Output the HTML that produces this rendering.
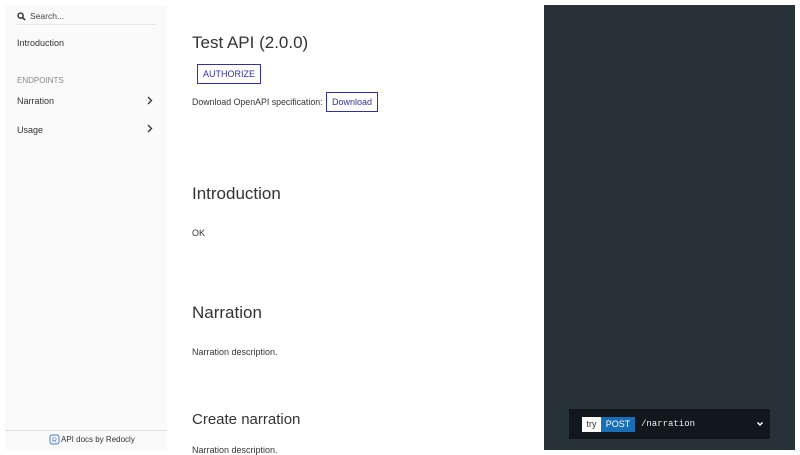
<!DOCTYPE html>
<html><head><meta charset="utf-8"><style>
*{margin:0;padding:0;box-sizing:border-box}
body{width:800px;height:450px;overflow:hidden;background:#fff;font-family:"Liberation Sans",sans-serif;color:#333;position:relative}
.a{position:absolute;white-space:nowrap}
#side{position:absolute;left:5px;top:5px;width:162px;height:445px;background:#fafafa}
#dark{position:absolute;left:544px;top:5px;width:251px;height:445px;background:#263238}
.s{font-size:9px;color:#333}
h1,h2{font-weight:normal;color:#333}
.btn{border:1px solid #32329f;color:#32329f;font-size:9px;padding:4px 5px}
</style></head><body>
<div id="side">
  <svg class="a" style="left:12px;top:7px" width="9" height="9" viewBox="0 0 10 10"><circle cx="4" cy="4" r="2.8" fill="none" stroke="#333" stroke-width="1.6"/><line x1="6" y1="6" x2="9" y2="9" stroke="#333" stroke-width="1.8"/></svg>
  <div class="a s" style="left:25px;top:6px;font-size:8.5px;color:#444">Search...</div>
  <div class="a" style="left:12px;top:19px;width:139px;height:1px;background:#e6e6e6"></div>
  <div class="a s" style="left:12px;top:33px">Introduction</div>
  <div class="a" style="left:12px;top:71px;font-size:8px;color:#888">ENDPOINTS</div>
  <div class="a s" style="left:12px;top:91px">Narration</div>
  <svg class="a" style="left:141px;top:91px" width="7" height="9" viewBox="0 0 7 9"><polyline points="2,1 5.5,4.5 2,8" fill="none" stroke="#333" stroke-width="1.3"/></svg>
  <div class="a s" style="left:12px;top:120px">Usage</div>
  <svg class="a" style="left:141px;top:119px" width="7" height="9" viewBox="0 0 7 9"><polyline points="2,1 5.5,4.5 2,8" fill="none" stroke="#333" stroke-width="1.3"/></svg>
  <div class="a" style="left:0;top:425px;width:162px;height:1px;background:#ddd"></div>
  <svg class="a" style="left:44px;top:429px" width="11" height="11" viewBox="0 0 11 11"><rect x="1" y="1" width="9" height="9" rx="2" fill="none" stroke="#4a7bc8" stroke-width="1"/><text x="3" y="8.5" font-size="7" fill="#4a7bc8" font-family="Liberation Sans">R</text></svg>
  <div class="a" style="left:56px;top:430px;font-size:8px;color:#333">API docs by Redocly</div>
</div>
<h1 class="a" style="left:192px;top:33px;font-size:17px">Test API (2.0.0)</h1>
<div class="a btn" style="left:197px;top:64px;padding:4px 5px;font-size:9px">AUTHORIZE</div>
<div class="a s" style="left:192px;top:97px;font-size:8.8px">Download OpenAPI specification:</div>
<div class="a btn" style="left:326px;top:92px;padding:4px 5px;font-size:9px">Download</div>
<h2 class="a" style="left:192px;top:184px;font-size:17px">Introduction</h2>
<div class="a s" style="left:192px;top:228px">OK</div>
<h2 class="a" style="left:192px;top:303px;font-size:17px">Narration</h2>
<div class="a s" style="left:192px;top:347px">Narration description.</div>
<h2 class="a" style="left:192px;top:411px;font-size:15px">Create narration</h2>
<div class="a s" style="left:192px;top:445px">Narration description.</div>
<div id="dark"></div>
<div class="a" style="left:569px;top:409px;width:201px;height:30px;background:#11171a"></div>
<div class="a" style="left:582px;top:417px;width:19px;height:15px;background:#fff;color:#333;font-size:9px;text-align:center;line-height:15px">try</div>
<div class="a" style="left:601px;top:417px;width:34px;height:15px;background:#186fb5;color:#fff;font-size:9px;text-align:center;line-height:15px">POST</div>
<div class="a" style="left:641px;top:419px;font-family:'Liberation Mono',monospace;font-size:9px;color:#eee">/narration</div>
<svg class="a" style="left:756px;top:421px" width="8" height="6" viewBox="0 0 8 6"><polyline points="1.5,1.5 4,4 6.5,1.5" fill="none" stroke="#fff" stroke-width="1.5"/></svg>
</body></html>
